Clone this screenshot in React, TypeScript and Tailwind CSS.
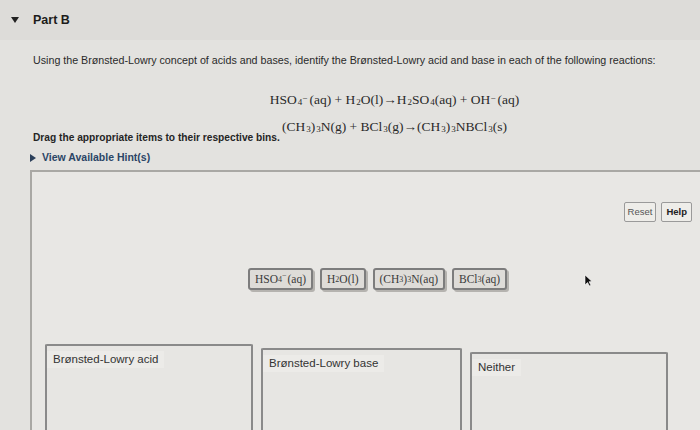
import { ReactNode } from 'react';

const serif = { fontFamily: '"Liberation Serif", "Times New Roman", serif' };

const Sub = ({ children, small }: { children: ReactNode; small?: boolean }) => (
  <sub className={small ? 'relative -bottom-[1px] text-[8px]' : 'relative -bottom-[1px] ml-[1px] text-[9px]'}>{children}</sub>
);
const Sup = ({ children, small }: { children: ReactNode; small?: boolean }) => (
  <sup className={small ? 'relative -top-[3px] mr-[1px] text-[8px]' : 'relative -top-[3px] mr-[2px] text-[9px]'}>{children}</sup>
);

// Chip in the drag area (gray bordered token)
const Chip = ({ children }: { children: ReactNode }) => (
  <div
    className="flex h-[22px] items-center rounded-[3px] border-2 border-[#7d7d7d] bg-[#dedcd8] px-[5px] text-[11.5px] text-[#3a3a3a] shadow-[2px_2px_0_#b5b3af]"
    style={serif}
  >
    {children}
  </div>
);

const Bin = ({ label, className }: { label: string; className?: string }) => (
  <div className={`h-[100px] rounded-[2px] border-2 border-[#8a8a8a] border-b-0 bg-[#e7e6e3] ${className ?? ''}`}>
    <div className="inline-block bg-[#ecebe8] px-[6px] pt-[1px] pb-[2px] text-[11.5px] leading-[14px] text-[#333]">{label}</div>
  </div>
);

export default function App() {
  return (
    <div
      className="relative h-[430px] w-[700px] overflow-hidden bg-[#e3e2df] text-[#222]"
      style={{ fontFamily: '"Liberation Sans", Arial, sans-serif' }}
    >
      {/* header */}
      <div className="flex h-[40px] items-center bg-[#dddcd9] pl-[10px]">
        <svg width="10" height="8" viewBox="0 0 10 8" className="mr-[13px]">
          <path d="M1 1 L9 1 L5 7 Z" fill="#222" />
        </svg>
        <span className="text-[12.5px] font-bold text-[#1c1c1c]">Part B</span>
      </div>

      <div className="pl-[33px] pt-[12px]">
        <p className="text-[10.7px] text-[#2a2a2a]">
          Using the Brønsted-Lowry concept of acids and bases, identify the Brønsted-Lowry acid and base in each of the following reactions:
        </p>

        <div className="mt-[18px] flex flex-col items-center pl-[56px] text-[13.5px] leading-[27px] text-[#2a2a2a]" style={serif}>
          <div>
            HSO<Sub>4</Sub><Sup>−</Sup>(aq) + H<Sub>2</Sub>O(l)→H<Sub>2</Sub>SO<Sub>4</Sub>(aq) + OH<Sup>−</Sup>(aq)
          </div>
          <div>
            (CH<Sub>3</Sub>)<Sub>3</Sub>N(g) + BCl<Sub>3</Sub>(g)→(CH<Sub>3</Sub>)<Sub>3</Sub>NBCl<Sub>3</Sub>(s)
          </div>
        </div>

        <p className="-mt-[10px] w-fit text-[10.2px] font-bold text-[#252525]">
          Drag the appropriate items to their respective bins.
        </p>

        <div className="mt-[5px] -ml-[3px] flex items-center gap-[6px]">
          <svg width="6" height="8" viewBox="0 0 6 8">
            <path d="M0 0 L6 4 L0 8 Z" fill="#2b3f5a" />
          </svg>
          <span className="text-[10.5px] font-bold text-[#2b4566]">View Available Hint(s)</span>
        </div>
      </div>

      {/* drag & drop area */}
      <div className="ml-[30px] mt-[4px] h-[270px] w-[690px] border-l-2 border-t-2 border-[#a9a8a4] bg-[#e8e7e4] pt-[30px]">
        <div className="flex justify-end gap-[5px] pr-[28px]">
          <button className="rounded-[2px] border border-[#9a9a9a] bg-[#eeede9] px-[3px] py-[2px] text-[9.5px] text-[#555]">Reset</button>
          <button className="rounded-[2px] border border-[#9a9a9a] bg-[#eeede9] px-[4px] py-[2px] text-[9.5px] font-bold text-[#222]">Help</button>
        </div>

        <div className="relative mt-[46px] flex gap-[7px] pl-[216px]">
          <Chip>
            HSO<Sub small>4</Sub><Sup small>−</Sup>(aq)
          </Chip>
          <Chip>
            H<Sub small>2</Sub>O(l)
          </Chip>
          <Chip>
            (CH<Sub small>3</Sub>)<Sub small>3</Sub>N(aq)
          </Chip>
          <Chip>
            BCl<Sub small>3</Sub>(aq)
          </Chip>
          {/* mouse cursor */}
          <svg width="9" height="13" viewBox="0 0 9 13" className="absolute left-[552px] top-[6px]">
            <path d="M1 1 L1 11 L3.5 8.5 L5.5 12 L7 11.2 L5 7.8 L8 7.5 Z" fill="#111" stroke="#fff" strokeWidth="0.6" />
          </svg>
        </div>

        <div className="mt-[54px] flex items-start gap-[8px] pl-[13px]">
          <Bin label="Brønsted-Lowry acid" className="w-[208px]" />
          <Bin label="Brønsted-Lowry base" className="mt-[4px] w-[201px]" />
          <Bin label="Neither" className="mt-[8px] w-[198px]" />
        </div>
      </div>
    </div>
  );
}
